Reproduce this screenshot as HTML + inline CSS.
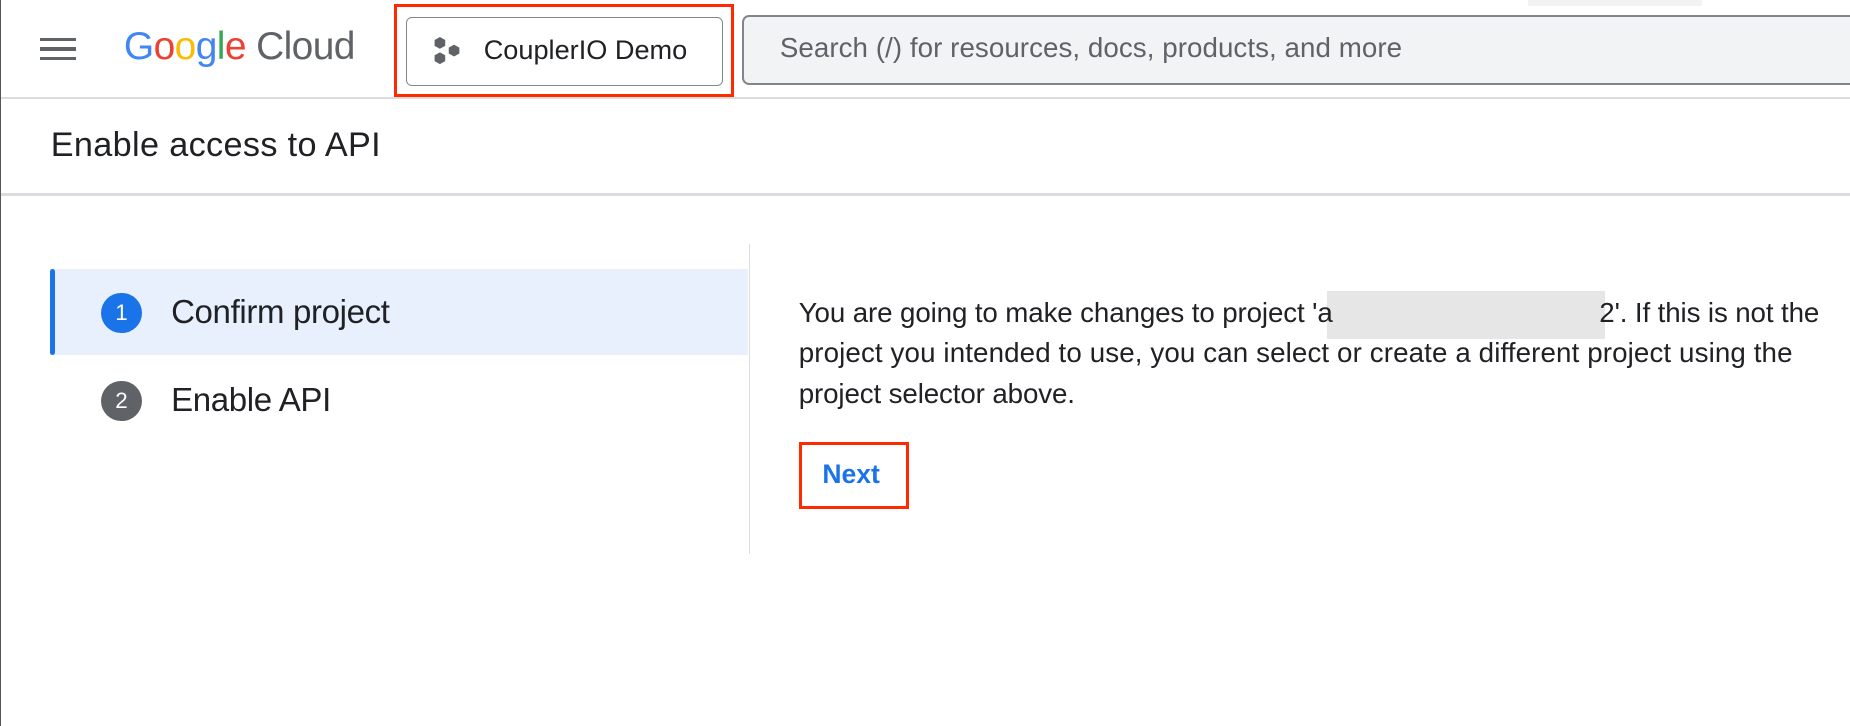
<!DOCTYPE html>
<html><head><meta charset="utf-8"><style>
html,body{margin:0;padding:0;width:1850px;height:726px;overflow:hidden;background:#fff}
#w{zoom:1.1798;width:1568px;height:615px;position:relative;font-family:"Liberation Sans",Arial,sans-serif;color:#202124}
.a{position:absolute;white-space:nowrap}
</style></head><body><div id="w">
<div class="a" style="left:0;top:0;width:1px;height:615px;background:#555"></div>
<div class="a" style="left:1295px;top:0;width:148px;height:5px;background:#f3f3f3"></div>
<div class="a" style="left:34px;top:32px;width:30px;height:3px;background:#5f6368"></div>
<div class="a" style="left:34px;top:40px;width:30px;height:3px;background:#5f6368"></div>
<div class="a" style="left:34px;top:48px;width:30px;height:3px;background:#5f6368"></div>
<div class="a" style="left:105px;top:21px;font-size:33px;letter-spacing:-0.5px"><span style="color:#4285f4">G</span><span style="color:#ea4335">o</span><span style="color:#fbbc05">o</span><span style="color:#4285f4">g</span><span style="color:#34a853">l</span><span style="color:#ea4335">e</span> <span style="color:#5f6368">Cloud</span></div>
<div class="a" style="left:334px;top:3px;width:283px;height:74px;border:3px solid #ff2a00"></div>
<div class="a" style="left:344px;top:14px;width:267px;height:57px;border:1px solid #80868b;border-radius:5px"></div>
<svg class="a" style="left:368px;top:31px" width="26" height="24" viewBox="0 0 26 24"><g fill="#5f6368"><polygon points="5,0 9.5,2.5 9.5,7.5 5,10 0.5,7.5 0.5,2.5"/><polygon points="5,13 9.5,15.5 9.5,20.5 5,23 0.5,20.5 0.5,15.5"/><polygon points="17,6.5 21.5,9 21.5,14 17,16.5 12.5,14 12.5,9"/></g></svg>
<div class="a" style="left:410px;top:29px;font-size:23px;color:#202124">CouplerIO Demo</div>
<div class="a" style="left:629px;top:13px;width:960px;height:56px;background:#f1f3f4;border:2px solid #80868b;border-radius:6px"></div>
<div class="a" style="left:661px;top:27px;font-size:23.5px;color:#5f6368;letter-spacing:0.05px">Search (/) for resources, docs, products, and more</div>
<div class="a" style="left:1px;top:82px;width:1567px;height:2px;background:#dadce0"></div>
<div class="a" style="left:43px;top:107px;font-size:29px;color:#202124;letter-spacing:0.3px">Enable access to API</div>
<div class="a" style="left:1px;top:164px;width:1567px;height:2px;background:#dadce0"></div>
<div class="a" style="left:635px;top:207px;width:1px;height:263px;background:#dadce0"></div>
<div class="a" style="left:42px;top:228px;width:592px;height:73px;background:#e8f0fe"></div>
<div class="a" style="left:42px;top:228px;width:5px;height:73px;background:#1a73e8;border-radius:3px"></div>
<div class="a" style="left:86px;top:248px;width:34px;height:34px;border-radius:50%;background:#1a73e8;color:#fff;font-size:19px;text-align:center;line-height:34px">1</div>
<div class="a" style="left:145px;top:248px;font-size:28px;letter-spacing:-0.3px">Confirm project</div>
<div class="a" style="left:86px;top:323px;width:34px;height:34px;border-radius:50%;background:#5f6368;color:#fff;font-size:19px;text-align:center;line-height:34px">2</div>
<div class="a" style="left:145px;top:323px;font-size:28px;letter-spacing:-0.3px">Enable API</div>
<div class="a" style="left:1125px;top:247px;width:235px;height:40px;background:#e6e6e6"></div>
<div class="a" style="left:677px;top:248px;width:900px;font-size:23.5px;line-height:34.5px;color:#202124;letter-spacing:-0.1px">You are going to make changes to project 'a<span style="display:inline-block;width:226px"></span>2'. If this is not the<br><span style="letter-spacing:0.1px">project you intended to use, you can select or create a different project using the</span><br>project selector above.</div>
<div class="a" style="left:677px;top:375px;width:88px;height:51px;border:3px solid #ff2a00"></div>
<div class="a" style="left:697px;top:389px;font-size:22.5px;color:#1a73e8;font-weight:bold">Next</div>
</div></body></html>
